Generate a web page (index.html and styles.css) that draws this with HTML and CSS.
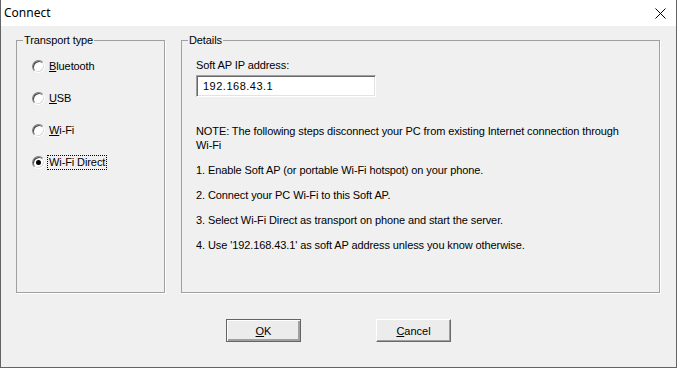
FILE: index.html
```html
<!DOCTYPE html>
<html lang="en">
<head>
    <meta charset="UTF-8">
    <meta name="viewport" content="width=device-width, initial-scale=1.0">
    <title>Connect</title>
    <link rel="stylesheet" href="styles.css">
</head>
<body>
    <div class="window">
        <div class="titlebar">
            <span class="title">Connect</span>
            <span class="close">
                <svg width="11" height="11" viewBox="0 0 11 11">
                    <path d="M0.5 0.5 L10.5 10.5 M10.5 0.5 L0.5 10.5" stroke="#000" stroke-width="1" fill="none"/>
                </svg>
            </span>
        </div>

        <div class="content">
            <div class="groups">
                <fieldset class="group transport">
                    <legend>Transport type</legend>
                    <label class="radio"><span class="dot"></span><span class="text"><u>B</u>luetooth</span></label>
                    <label class="radio"><span class="dot"></span><span class="text"><u>U</u>SB</span></label>
                    <label class="radio"><span class="dot"></span><span class="text"><u>W</u>i-Fi</span></label>
                    <label class="radio checked"><span class="dot"></span><span class="text focus">Wi-Fi Direct</span></label>
                </fieldset>

                <fieldset class="group details">
                    <legend>Details</legend>
                    <div class="field-label">Soft AP IP address:</div>
                    <div class="textbox">192.168.43.1</div>
                    <p class="note">NOTE: The following steps disconnect your PC from existing Internet connection through<br>Wi-Fi</p>
                    <p class="step">1. Enable Soft AP (or portable Wi-Fi hotspot) on your phone.</p>
                    <p class="step">2. Connect your PC Wi-Fi to this Soft AP.</p>
                    <p class="step">3. Select Wi-Fi Direct as transport on phone and start the server.</p>
                    <p class="step">4. Use '192.168.43.1' as soft AP address unless you know otherwise.</p>
                </fieldset>
            </div>

            <div class="buttons">
                <button class="btn default"><u>O</u>K</button>
                <button class="btn"><u>C</u>ancel</button>
            </div>
        </div>
    </div>
</body>
</html>
```

FILE: styles.css
```css
body {
    margin: 0;
    font-family: "Liberation Sans", Arial, sans-serif;
    font-size: 11px;
    letter-spacing: -0.1px;
    color: #000;
    background: #f0f0f0;
}
.window {
    width: 677px;
    height: 368px;
    box-sizing: border-box;
    border: 1px solid #646464;
    border-top: none;
    background: #f0f0f0;
    display: flex;
    flex-direction: column;
}
.titlebar {
    height: 26px;
    background: #fff;
    display: flex;
    align-items: center;
    justify-content: space-between;
}
.title {
    font-family: "Noto Sans", sans-serif;
    font-size: 12px;
    letter-spacing: 0;
    margin-left: 3px;
    margin-top: -1px;
}
.close {
    display: flex;
    margin-right: 10px;
    margin-top: 1px;
}
.content {
    padding: 8px 15px 0 15px;
}
.groups {
    display: flex;
    gap: 16px;
}
.group {
    margin: 0;
    height: 259px;
    box-sizing: border-box;
    border: 1px solid #a0a0a0;
    box-shadow: 1px 1px 0 #fff;
    padding: 12px 0 0 15px;
}
.group legend {
    line-height: 13px;
    padding: 0 1px;
}
.transport {
    width: 149px;
    display: flex;
    flex-direction: column;
    gap: 18px;
}
.transport legend {
    margin-left: -9px;
}
.details {
    width: 479px;
    padding-left: 14px;
}
.details legend {
    margin-left: -8px;
}
.radio {
    display: flex;
    align-items: center;
    height: 14px;
    line-height: 13px;
}
.dot {
    width: 13px;
    height: 13px;
    box-sizing: border-box;
    border-radius: 50%;
    border: 1px solid;
    border-color: #808080 #fff #fff #808080;
    box-shadow: inset 1px 1px 0 #404040, inset -1px -1px 0 #d8d8d8;
    background: #fff;
    position: relative;
    flex: none;
}
.checked .dot::after {
    content: "";
    position: absolute;
    left: 3px;
    top: 3px;
    width: 5px;
    height: 5px;
    border-radius: 50%;
    background: #000;
}
.text {
    margin-left: 2px;
    padding: 0 1px;
    border: 1px solid transparent;
}
.text.focus {
    border: 1px dotted #000;
}
.field-label {
    line-height: 13px;
}
.textbox {
    margin-top: 3px;
    width: 180px;
    height: 22px;
    box-sizing: border-box;
    background: #fff;
    border: 1px solid;
    border-color: #a0a0a0 #fff #fff #a0a0a0;
    box-shadow: inset 1px 1px 0 #696969, inset -1px -1px 0 #e3e3e3;
    padding: 0 0 0 6px;
    line-height: 20px;
    letter-spacing: 0.5px;
}
.note {
    margin: 27px 0 0 0;
    line-height: 14px;
}
.step {
    margin: 11px 0 0 0;
    line-height: 14px;
}
.buttons {
    display: flex;
    justify-content: center;
    gap: 75px;
    margin-top: 26px;
}
.btn {
    width: 75px;
    height: 23px;
    box-sizing: border-box;
    font-family: "Liberation Sans", Arial, sans-serif;
    font-size: 11px;
    color: #000;
    background: #ececec;
    border: 1px solid;
    border-color: #fff #696969 #696969 #fff;
    box-shadow: inset -1px -1px 0 #a0a0a0;
    padding: 0;
}
.btn.default {
    border: 1px solid #646464;
    box-shadow: inset 1px 1px 0 #fff, inset -2px -2px 0 #a0a0a0;
}
```
